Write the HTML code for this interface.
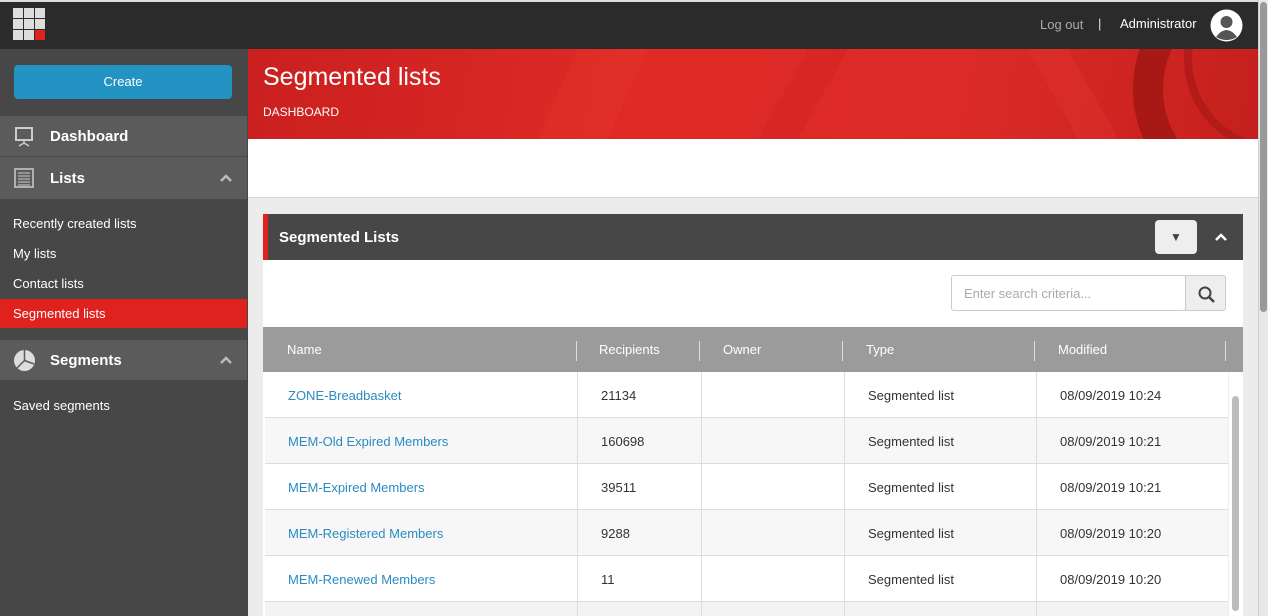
<!DOCTYPE html>
<html style="overflow:hidden;height:616px"><head><meta charset="utf-8"><style>
*{box-sizing:border-box;margin:0;padding:0}
body{width:1268px;height:616px;overflow:hidden;font-family:"Liberation Sans",sans-serif;background:#ececec;position:relative}
.top{position:absolute;left:0;top:0;width:1258px;height:49px;background:#2b2b2b;border-top:2px solid #ddd}
.sb{position:absolute;left:0;top:49px;width:248px;height:567px;background:#474747}
.pscroll{position:absolute;left:1258px;top:0;width:10px;height:616px;background:#e8e8e8;border-left:1px solid #ccc}
.pscroll div{position:absolute;left:1px;top:2px;width:7px;height:310px;background:#999;border-radius:4px}
.hdr{position:absolute;left:248px;top:49px;width:1010px;height:90px;background:linear-gradient(100deg,#c9201f 0%,#e02a26 40%,#dc2b27 70%,#c4201d 100%);overflow:hidden}
.white{position:absolute;left:248px;top:139px;width:1010px;height:59px;background:#fff;border-bottom:1px solid #d8d8d8}
.panel{position:absolute;left:263px;top:214px;width:980px;height:402px;background:#fff;overflow:hidden}
.ph{height:46px;background:#474747;border-left:5px solid #e0221f;color:#fff;font-size:15px;font-weight:bold;padding:15px 0 0 11px;position:relative}
.th{position:absolute;left:0;top:113px;width:980px;height:45px;background:#9b9b9b;color:#fff;font-size:13px}
.th span{position:absolute;top:15px}
.th i{position:absolute;top:14px;width:1px;height:20px;background:#ddd}
.row{position:absolute;left:2px;width:963px;height:46px;border-bottom:1px solid #ddd;font-size:13px;color:#333}
.row span{position:absolute;top:16px}
.row i{position:absolute;top:0;width:1px;height:46px;background:#ddd}
a{color:#2a8bc2;text-decoration:none}
.nav{position:absolute;left:0;width:247px;color:#fff;font-size:13px}
.chev{position:absolute;left:219px}
</style></head><body>
<div class="top">
 <svg style="position:absolute;left:13px;top:6px" width="33" height="33"><g fill="#ddd"><rect x="0" y="0" width="10" height="10"/><rect x="11" y="0" width="10" height="10"/><rect x="22" y="0" width="10" height="10"/><rect x="0" y="11" width="10" height="10"/><rect x="11" y="11" width="10" height="10"/><rect x="22" y="11" width="10" height="10"/><rect x="0" y="22" width="10" height="10"/><rect x="11" y="22" width="10" height="10"/></g><rect x="22" y="22" width="10" height="10" fill="#e0221f"/></svg>
 <div style="position:absolute;left:1040px;top:15px;color:#aaa;font-size:13px">Log out</div>
 <div style="position:absolute;left:1098px;top:14px;color:#ddd;font-size:13px">|</div>
 <div style="position:absolute;left:1120px;top:14px;color:#fff;font-size:13px">Administrator</div>
 <svg style="position:absolute;left:1210px;top:7px" width="33" height="33"><circle cx="16.5" cy="16.5" r="16" fill="#fff"/><circle cx="16.5" cy="13" r="6" fill="#555"/><path d="M6 28 Q16.5 14 27 28 Q16.5 34 6 28Z" fill="#555"/></svg>
</div>
<div class="sb">
 <div style="position:absolute;left:14px;top:16px;width:218px;height:34px;background:#2393c3;border-radius:4px;color:#fff;font-size:13px;text-align:center;line-height:34px">Create</div>
 <div class="nav" style="top:67px;height:40px;background:#5b5b5b;font-size:15px;font-weight:bold"><span style="position:absolute;left:50px;top:12px">Dashboard</span>
  <svg style="position:absolute;left:15px;top:11px" width="18" height="20"><rect x="1" y="1" width="16" height="12" fill="none" stroke="#ccc" stroke-width="2"/><path d="M9 13v4M4 19l5-3 5 3" stroke="#ccc" stroke-width="1.5" fill="none"/></svg></div>
 <div class="nav" style="top:108px;height:42px;background:#5b5b5b;font-size:15px;font-weight:bold"><span style="position:absolute;left:50px;top:13px">Lists</span>
  <svg style="position:absolute;left:14px;top:11px" width="20" height="20"><rect x="1" y="1" width="18" height="18" fill="none" stroke="#ccc" stroke-width="1.5"/><path d="M4 5h12M4 8h12M4 11h12M4 14h12M4 17h12" stroke="#ccc"/></svg>
  <svg class="chev" style="top:17px" width="14" height="9"><path d="M2 7l5-5 5 5" stroke="#bbb" stroke-width="2.5" fill="none"/></svg></div>
 <div class="nav" style="top:167px"><span style="position:absolute;left:13px">Recently created lists</span></div>
 <div class="nav" style="top:197px"><span style="position:absolute;left:13px">My lists</span></div>
 <div class="nav" style="top:227px"><span style="position:absolute;left:13px">Contact lists</span></div>
 <div class="nav" style="top:250px;height:29px;background:#e0221f"><span style="position:absolute;left:13px;top:7px">Segmented lists</span></div>
 <div class="nav" style="top:291px;height:40px;background:#5b5b5b;font-size:15px;font-weight:bold"><span style="position:absolute;left:50px;top:12px">Segments</span>
  <svg style="position:absolute;left:13px;top:9px" width="23" height="23"><circle cx="11.5" cy="11.5" r="10.5" fill="#ddd"/><path d="M11.5 11.5V1M11.5 11.5L21 15M11.5 11.5L4 19" stroke="#5b5b5b" stroke-width="1.5"/></svg>
  <svg class="chev" style="top:16px" width="14" height="9"><path d="M2 7l5-5 5 5" stroke="#bbb" stroke-width="2.5" fill="none"/></svg></div>
 <div class="nav" style="top:349px"><span style="position:absolute;left:13px">Saved segments</span></div>
</div>
<div class="hdr">
 <svg width="1010" height="90" style="position:absolute;left:0;top:0"><path d="M330 0L290 90H360L400 0Z" fill="#e33a2f" opacity=".3"/><path d="M510 90L560 0H600L550 90Z" fill="#c21c1b" opacity=".25"/><path d="M780 0L830 90H870L820 0Z" fill="#e63c33" opacity=".25"/><circle cx="1010" cy="40" r="110" fill="none" stroke="#a81815" stroke-width="30"/><circle cx="1030" cy="10" r="90" fill="none" stroke="#b31b18" stroke-width="8"/></svg>
 <div style="position:absolute;left:15px;top:14px;color:#fff;font-size:25px">Segmented lists</div>
 <div style="position:absolute;left:15px;top:56px;color:#fff;font-size:12px">DASHBOARD</div>
</div>
<div class="white"></div>
<div class="panel">
 <div class="ph">Segmented Lists
  <div style="position:absolute;left:887px;top:6px;width:42px;height:34px;background:#eee;border-radius:4px;color:#444;font-size:12px;text-align:center;line-height:34px">&#9660;</div>
  <svg style="position:absolute;left:946px;top:19px" width="14" height="9"><path d="M2 7l5-5 5 5" stroke="#fff" stroke-width="2.5" fill="none"/></svg>
 </div>
 <div style="position:absolute;left:688px;top:61px;width:235px;height:36px;border:1px solid #ccc;border-radius:3px;color:#aaa;font-size:13px;padding:10px 12px">Enter search criteria...</div>
 <div style="position:absolute;left:922px;top:61px;width:41px;height:36px;border:1px solid #ccc;background:#eee;border-radius:0 3px 3px 0"><svg style="position:absolute;left:12px;top:10px" width="17" height="17"><circle cx="7" cy="7" r="5.5" fill="none" stroke="#444" stroke-width="2"/><path d="M11 11l5 5" stroke="#444" stroke-width="2.5"/></svg></div>
 <div class="th"><span style="left:24px">Name</span><i style="left:313px"></i><span style="left:336px">Recipients</span><i style="left:436px"></i><span style="left:460px">Owner</span><i style="left:579px"></i><span style="left:603px">Type</span><i style="left:771px"></i><span style="left:795px">Modified</span><i style="left:962px"></i></div>
 <div class="row" style="top:158px;background:#fff"><span style="left:23px"><a>ZONE-Breadbasket</a></span><i style="left:312px"></i><span style="left:336px">21134</span><i style="left:436px"></i><i style="left:579px"></i><span style="left:603px">Segmented list</span><i style="left:771px"></i><span style="left:795px">08/09/2019 10:24</span></div>
 <div class="row" style="top:204px;background:#f7f7f7"><span style="left:23px"><a>MEM-Old Expired Members</a></span><i style="left:312px"></i><span style="left:336px">160698</span><i style="left:436px"></i><i style="left:579px"></i><span style="left:603px">Segmented list</span><i style="left:771px"></i><span style="left:795px">08/09/2019 10:21</span></div>
 <div class="row" style="top:250px;background:#fff"><span style="left:23px"><a>MEM-Expired Members</a></span><i style="left:312px"></i><span style="left:336px">39511</span><i style="left:436px"></i><i style="left:579px"></i><span style="left:603px">Segmented list</span><i style="left:771px"></i><span style="left:795px">08/09/2019 10:21</span></div>
 <div class="row" style="top:296px;background:#f7f7f7"><span style="left:23px"><a>MEM-Registered Members</a></span><i style="left:312px"></i><span style="left:336px">9288</span><i style="left:436px"></i><i style="left:579px"></i><span style="left:603px">Segmented list</span><i style="left:771px"></i><span style="left:795px">08/09/2019 10:20</span></div>
 <div class="row" style="top:342px;background:#fff"><span style="left:23px"><a>MEM-Renewed Members</a></span><i style="left:312px"></i><span style="left:336px">11</span><i style="left:436px"></i><i style="left:579px"></i><span style="left:603px">Segmented list</span><i style="left:771px"></i><span style="left:795px">08/09/2019 10:20</span></div>
 <div style="position:absolute;left:2px;top:388px;width:963px;height:14px;background:#f3f3f3"><i style="position:absolute;left:312px;top:0;width:1px;height:14px;background:#ddd"></i><i style="position:absolute;left:436px;top:0;width:1px;height:14px;background:#ddd"></i><i style="position:absolute;left:579px;top:0;width:1px;height:14px;background:#ddd"></i><i style="position:absolute;left:771px;top:0;width:1px;height:14px;background:#ddd"></i></div>
 <div style="position:absolute;left:965px;top:158px;width:15px;height:244px;background:#fff;border-left:1px solid #eee"><div style="position:absolute;left:3px;top:24px;width:7px;height:215px;background:#bbb;border-radius:4px"></div></div>
</div>
<div class="pscroll"><div></div></div>
</body></html>
